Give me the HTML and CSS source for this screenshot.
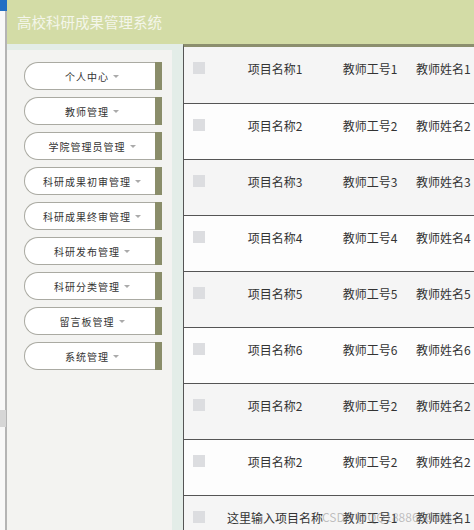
FILE: index.html
```html
<!DOCTYPE html>
<html lang="zh-CN">
<head>
    <meta charset="UTF-8">
    <meta name="viewport" content="width=device-width, initial-scale=1.0">
    <title>高校科研成果管理系统</title>
    <link rel="stylesheet" href="styles.css">
</head>
<body>
    <div class="page">
        <div class="edge">
            <div class="edge-top"></div>
            <div class="edge-tab"></div>
        </div>
        <div class="main">
            <div class="header">高校科研成果管理系统</div>
            <div class="body">
                <div class="sidebar">
                    <div class="menu-btn"><span class="menu-label">个人中心<i class="caret"></i></span><span class="menu-bar"></span></div>
                    <div class="menu-btn"><span class="menu-label">教师管理<i class="caret"></i></span><span class="menu-bar"></span></div>
                    <div class="menu-btn"><span class="menu-label">学院管理员管理<i class="caret"></i></span><span class="menu-bar"></span></div>
                    <div class="menu-btn"><span class="menu-label">科研成果初审管理<i class="caret"></i></span><span class="menu-bar"></span></div>
                    <div class="menu-btn"><span class="menu-label">科研成果终审管理<i class="caret"></i></span><span class="menu-bar"></span></div>
                    <div class="menu-btn"><span class="menu-label">科研发布管理<i class="caret"></i></span><span class="menu-bar"></span></div>
                    <div class="menu-btn"><span class="menu-label">科研分类管理<i class="caret"></i></span><span class="menu-bar"></span></div>
                    <div class="menu-btn"><span class="menu-label">留言板管理<i class="caret"></i></span><span class="menu-bar"></span></div>
                    <div class="menu-btn"><span class="menu-label">系统管理<i class="caret"></i></span><span class="menu-bar"></span></div>
                </div>
                <div class="content">
                    <div class="row odd"><span class="check"></span><span class="cell">项目名称1</span><span class="cell">教师工号1</span><span class="cell last">教师姓名1</span></div>
                    <div class="row"><span class="check"></span><span class="cell">项目名称2</span><span class="cell">教师工号2</span><span class="cell last">教师姓名2</span></div>
                    <div class="row odd"><span class="check"></span><span class="cell">项目名称3</span><span class="cell">教师工号3</span><span class="cell last">教师姓名3</span></div>
                    <div class="row"><span class="check"></span><span class="cell">项目名称4</span><span class="cell">教师工号4</span><span class="cell last">教师姓名4</span></div>
                    <div class="row odd"><span class="check"></span><span class="cell">项目名称5</span><span class="cell">教师工号5</span><span class="cell last">教师姓名5</span></div>
                    <div class="row"><span class="check"></span><span class="cell">项目名称6</span><span class="cell">教师工号6</span><span class="cell last">教师姓名6</span></div>
                    <div class="row odd"><span class="check"></span><span class="cell">项目名称2</span><span class="cell">教师工号2</span><span class="cell last">教师姓名2</span></div>
                    <div class="row"><span class="check"></span><span class="cell">项目名称2</span><span class="cell">教师工号2</span><span class="cell last">教师姓名2</span></div>
                    <div class="row odd"><span class="check"></span><span class="cell">这里输入项目名称</span><span class="cell">教师工号1</span><span class="cell last">教师姓名1</span></div>
                    <div class="watermark">CSDN @QQ1888666888</div>
                </div>
            </div>
        </div>
    </div>
</body>
</html>
```

FILE: styles.css
```css
body {
    margin: 0;
    font-family: "Noto Sans CJK SC", "Noto Sans", sans-serif;
    background-color: #fff;
    overflow: hidden;
}
.page {
    display: flex;
    width: 474px;
    height: 530px;
}
.edge {
    width: 5px;
    flex-shrink: 0;
    background-color: #f8f8f8;
    border-right: 2px solid #b4b4b4;
}
.edge-top {
    width: 7px;
    height: 11px;
    background-color: #2270c4;
}
.edge-tab {
    width: 6px;
    height: 17px;
    margin-top: 399px;
    background-color: #d6d6d6;
}
.main {
    flex: 1;
    display: flex;
    flex-direction: column;
    min-width: 0;
}
.header {
    height: 44px;
    line-height: 44px;
    padding-left: 10px;
    background-color: #d3dca6;
    color: #f4f6ea;
    font-size: 14.5px;
    flex-shrink: 0;
}
.body {
    flex: 1;
    display: flex;
    min-height: 0;
}
.sidebar {
    width: 148px;
    flex-shrink: 0;
    background-color: #f3f3f1;
    border-top: 6px solid #e3ede8;
    border-right: 11px solid #e3ede8;
    padding: 12px 0 0 17px;
    display: flex;
    flex-direction: column;
    gap: 7px;
}
.menu-btn {
    display: flex;
    width: 138px;
    height: 28px;
}
.menu-label {
    flex: 1;
    display: flex;
    align-items: center;
    justify-content: center;
    border: 1px solid #aaaaa2;
    border-right: none;
    border-radius: 14px 0 0 14px;
    background-color: #fff;
    font-size: 10px;
    letter-spacing: 1px;
    color: #333;
    padding-left: 4px;
}
.caret {
    width: 0;
    height: 0;
    margin-left: 4px;
    border-left: 3px solid transparent;
    border-right: 3px solid transparent;
    border-top: 3px solid #aaa;
}
.menu-bar {
    width: 7px;
    background-color: #8a8d6a;
}
.content {
    flex: 1;
    min-width: 0;
    position: relative;
    border-left: 1px solid #555;
    border-top: 3px solid #8c8f6e;
}
.row {
    display: grid;
    grid-template-columns: 42px 98px 92px 1fr;
    height: 55px;
    border-bottom: 1px solid #555;
    background-color: #fdfdfd;
    font-size: 12px;
    color: #333;
}
.row.odd {
    background-color: #f5f5f5;
}
.row:first-child {
    height: 56px;
}
.check {
    width: 12px;
    height: 12px;
    margin: 15px 0 0 9px;
    background-color: #dcdde0;
}
.cell {
    padding-top: 14px;
    line-height: 16px;
    text-align: center;
    white-space: nowrap;
}
.cell.last {
    text-align: left;
}
.watermark {
    position: absolute;
    left: 138px;
    top: 462px;
    font-size: 12px;
    line-height: 16px;
    color: rgba(120, 120, 120, 0.45);
    white-space: nowrap;
}
```
